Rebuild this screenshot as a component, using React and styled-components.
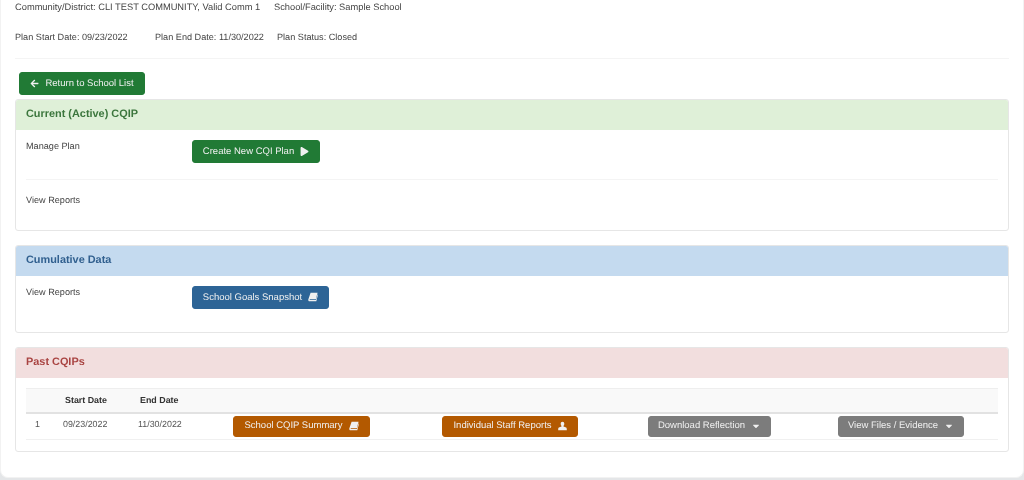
import React from 'react';
import styled, { createGlobalStyle } from 'styled-components';
import { FaArrowLeft, FaPlay, FaCaretDown } from 'react-icons/fa';

const pastPlans = [
    { id: 1, start: '09/23/2022', end: '11/30/2022' },
];

// tilted book, same shape as the glyph on the report buttons
const BookIcon = () => (
    <svg width="10" height="10" viewBox="0 0 10 10" fill="currentColor">
        <path d="M2.6 .8H9.6L7.8 7.2H2.2C1.6 7.2 1.4 7.8 2 8H7.9L9.5 2.4L10 2.8L8.3 9.2H1.6C.6 9.2 .1 8.4 .3 7.4Z" />
    </svg>
);

const PersonIcon = () => (
    <svg width="9" height="10" viewBox="0 0 10 10" fill="currentColor">
        <path d="M5 .3C6.3 .3 7 1.3 7 2.6C7 3.7 6.5 4.5 6.1 4.9V5.6L9 6.8C9.6 7.1 9.8 7.6 9.8 9.6H.2C.2 7.6 .4 7.1 1 6.8L3.9 5.6V4.9C3.5 4.5 3 3.7 3 2.6C3 1.3 3.7 .3 5 .3Z" />
    </svg>
);

const App = () => {
    return (
        <>
            <GlobalStyle />
            <Page>
                <InfoRow>
                    <InfoItem $width="259px">Community/District: CLI TEST COMMUNITY, Valid Comm 1</InfoItem>
                    <InfoItem>School/Facility: Sample School</InfoItem>
                </InfoRow>
                <PlanRow>
                    <InfoItem $width="140px">Plan Start Date: 09/23/2022</InfoItem>
                    <InfoItem $width="122px">Plan End Date: 11/30/2022</InfoItem>
                    <InfoItem>Plan Status: Closed</InfoItem>
                </PlanRow>
                <BackRow>
                    <Button $color="#217a35" $width="126px">
                        <FaArrowLeft size={9} />
                        Return to School List
                    </Button>
                </BackRow>
                <Panel>
                    <PanelHeader $bg="#dff0d8" $color="#3c763d">Current (Active) CQIP</PanelHeader>
                    <ActiveBody>
                        <ManageRow>
                            <RowLabel>Manage Plan</RowLabel>
                            <Button $color="#217a35" $width="128px">
                                Create New CQI Plan
                                <FaPlay size={9} />
                            </Button>
                        </ManageRow>
                        <ReportsRow>
                            <RowLabel>View Reports</RowLabel>
                        </ReportsRow>
                    </ActiveBody>
                </Panel>
                <Panel>
                    <PanelHeader $bg="#c4daef" $color="#31608f">Cumulative Data</PanelHeader>
                    <CumulativeBody>
                        <RowLabel>View Reports</RowLabel>
                        <Button $color="#2d6496" $width="137px">
                            School Goals Snapshot
                            <BookIcon />
                        </Button>
                    </CumulativeBody>
                </Panel>
                <Panel>
                    <PanelHeader $bg="#f2dede" $color="#a94442">Past CQIPs</PanelHeader>
                    <PastBody>
                        <Table>
                            <thead>
                                <tr>
                                    <HeadCell $width="37px" />
                                    <HeadCell $width="75px">Start Date</HeadCell>
                                    <HeadCell $width="95px">End Date</HeadCell>
                                    <HeadCell $width="209px" />
                                    <HeadCell $width="206px" />
                                    <HeadCell $width="190px" />
                                    <HeadCell />
                                </tr>
                            </thead>
                            <tbody>
                                {pastPlans.map((plan) => (
                                    <tr key={plan.id}>
                                        <Cell>{plan.id}</Cell>
                                        <Cell>{plan.start}</Cell>
                                        <Cell>{plan.end}</Cell>
                                        <ButtonCell>
                                            <Button $color="#b35900" $width="137px" $height="21px">
                                                School CQIP Summary
                                                <BookIcon />
                                            </Button>
                                        </ButtonCell>
                                        <ButtonCell>
                                            <Button $color="#b35900" $width="136px" $height="21px">
                                                Individual Staff Reports
                                                <PersonIcon />
                                            </Button>
                                        </ButtonCell>
                                        <ButtonCell>
                                            <Button $color="#7c7c7c" $width="123px" $height="21px">
                                                Download Reflection
                                                <FaCaretDown size={10} />
                                            </Button>
                                        </ButtonCell>
                                        <ButtonCell>
                                            <Button $color="#7c7c7c" $width="126px" $height="21px">
                                                View Files / Evidence
                                                <FaCaretDown size={10} />
                                            </Button>
                                        </ButtonCell>
                                    </tr>
                                ))}
                            </tbody>
                        </Table>
                    </PastBody>
                </Panel>
            </Page>
        </>
    );
};

const GlobalStyle = createGlobalStyle`
    html, body {
        margin: 0;
        padding: 0;
        background: #e4e6e8;
        overflow: hidden;
    }
    * {
        box-sizing: border-box;
    }
`;

const Page = styled.div`
    width: 1024px;
    height: 478px;
    padding: 0 14px;
    background: #fff;
    border: 1px solid #f2f2f2;
    border-top: none;
    border-radius: 0 0 8px 8px;
    font-family: "Liberation Sans", Arial, sans-serif;
    font-size: 9.15px;
    color: #444;
    text-rendering: geometricPrecision;
    filter: blur(0.3px);
`;

const InfoRow = styled.div`
    display: flex;
    align-items: center;
    height: 14px;
    font-size: 9.3px;
`;

const PlanRow = styled.div`
    display: flex;
    align-items: center;
    height: 29px;
    margin-top: 16px;
    padding-bottom: 14px;
    border-bottom: 1px solid #f4f4f4;
`;

const InfoItem = styled.span`
    width: ${(props) => props.$width || 'auto'};
`;

const BackRow = styled.div`
    display: flex;
    padding: 13px 0 4px 4px;
`;

const Button = styled.button`
    display: inline-flex;
    align-items: center;
    justify-content: center;
    gap: 6px;
    width: ${(props) => props.$width};
    height: ${(props) => props.$height || '23px'};
    padding: 0 0 1px;
    border: 1px solid ${(props) => props.$color};
    border-radius: 3px;
    background: ${(props) => props.$color};
    color: #f0f0f0;
    font-family: inherit;
    font-size: 9.5px;
    text-rendering: geometricPrecision;
`;

const Panel = styled.section`
    margin-bottom: 14px;
    background: #fff;
    border: 1px solid #e6e6e6;
    border-radius: 3px;
    overflow: hidden;
`;

const PanelHeader = styled.h3`
    display: flex;
    align-items: center;
    height: 30px;
    margin: 0;
    padding: 0 10px 2px;
    background: ${(props) => props.$bg};
    color: ${(props) => props.$color};
    font-size: 10.9px;
    font-weight: bold;
`;

const RowLabel = styled.div`
    width: 166px;
    line-height: 12px;
`;

const ActiveBody = styled.div`
    height: 100px;
    padding: 0 10px;
`;

const ManageRow = styled.div`
    display: flex;
    align-items: flex-start;
    height: 50px;
    padding-top: 10px;
    border-bottom: 1px solid #f4f4f4;
`;

const ReportsRow = styled.div`
    padding-top: 14px;
`;

const CumulativeBody = styled.div`
    display: flex;
    align-items: flex-start;
    height: 56px;
    padding: 10px 10px 0;
`;

const PastBody = styled.div`
    height: 73px;
    padding: 10px;
`;

const Table = styled.table`
    width: 972px;
    border-collapse: collapse;
    table-layout: fixed;
`;

const HeadCell = styled.th`
    width: ${(props) => props.$width || 'auto'};
    height: 24px;
    padding: 0 0 0 2px;
    background: #f9f9f9;
    border-top: 1px solid #eee;
    border-bottom: 2px solid #e2e2e2;
    text-align: left;
    font-size: 8.9px;
    color: #333;

    &:first-child {
        padding-left: 9px;
    }
`;

const Cell = styled.td`
    height: 27px;
    padding: 0 0 5px 0;
    border-bottom: 1px solid #f0f0f0;
    font-size: 8.9px;
    color: #555;

    &:first-child {
        padding-left: 9px;
    }
`;

const ButtonCell = styled(Cell)`
    padding: 0;
`;

export default App;
